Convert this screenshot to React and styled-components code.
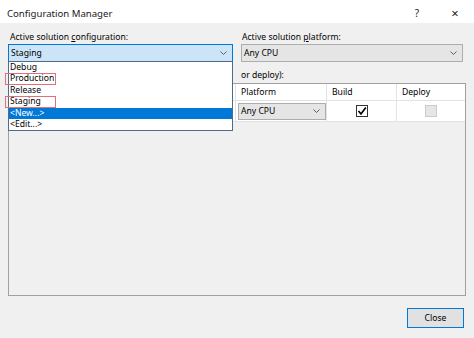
import styled, { createGlobalStyle } from "styled-components"

const GlobalStyle = createGlobalStyle`
html, body {
  margin: 0;
  padding: 0;
  background: #ffffff;
}
body {
  font-family: "Noto Sans", "Open Sans", sans-serif;
}
`

const Window = styled.div`
width: 474px;
height: 338px;
background: #f0f0f0;
display: flex;
flex-direction: column;
color: #000;
font-size: 8.6px;
overflow: hidden;
`

const TitleBar = styled.div`
height: 23px;
background: #ffffff;
display: flex;
align-items: center;
padding-left: 7px;
font-size: 9.6px;
color: #1a1a1a;
`

const Title = styled.span`
flex: 1;
padding-top: 3px;
`

const TitleButton = styled.span`
width: 38px;
text-align: center;
padding-top: 3px;
font-size: ${(p) => p.size || 10}px;
color: #222;
`

const Body = styled.div`
flex: 1;
display: flex;
flex-direction: column;
padding: 8px 8px 0 8px;
`

const TwoCols = styled.div`
display: grid;
grid-template-columns: 225px 222px;
column-gap: 8px;
`

const Label = styled.div`
height: 12px;
line-height: 12px;
padding-left: ${(p) => (p.indent === undefined ? 1 : p.indent)}px;
white-space: nowrap;
`

const Field = styled.div`
position: relative;
display: flex;
flex-direction: column;
gap: 1px;
`

const Combo = styled.div`
height: 18px;
box-sizing: border-box;
display: flex;
align-items: center;
justify-content: space-between;
padding: 0 5px 0 2px;
border: 1px solid ${(p) => (p.active ? "#0078d7" : "#adadad")};
background: ${(p) => (p.active ? "#cce4f7" : "#e5e5e5")};
`

const DropList = styled.div`
position: absolute;
top: 100%;
left: 0;
right: 0;
margin-top: -1px;
background: #ffffff;
border: 1px solid #4d6a8f;
z-index: 5;
`

const Item = styled.div`
height: 11.4px;
line-height: 11.4px;
padding-left: 1px;
background: ${(p) => (p.selected ? "#0078d7" : "transparent")};
color: ${(p) => (p.selected ? "#ffffff" : "#000")};
`

const Marked = styled.span`
display: inline-block;
width: 51px;
height: 12px;
margin-left: -5px;
padding-left: 5px;
box-sizing: border-box;
outline: 1px solid #e2707a;
outline-offset: -1px;
`

const ContextRow = styled(TwoCols)`
margin-top: 7px;
`

const Table = styled.div`
margin-top: 2px;
height: 213px;
box-sizing: border-box;
border: 1px solid #a0a0a0;
background: #f0f0f0;
`

const Row = styled.div`
display: grid;
grid-template-columns: 111px 116px 91px 70px 1fr;
background: #ffffff;
height: ${(p) => p.h}px;
`

const Cell = styled.div`
display: flex;
align-items: center;
justify-content: ${(p) => (p.center ? "center" : "flex-start")};
padding-left: ${(p) => (p.center ? 0 : 5)}px;
border-right: 1px solid #e3e3e3;
border-bottom: 1px solid #e3e3e3;
white-space: nowrap;
overflow: hidden;
&:last-child {
  border-right: none;
}
`

const CellCombo = styled(Combo)`
width: 88px;
height: 17px;
margin-left: -3px;
`

const Check = styled.span`
width: 12px;
height: 12px;
box-sizing: border-box;
display: flex;
align-items: center;
justify-content: center;
border: 1px solid ${(p) => (p.disabled ? "#cccccc" : "#333333")};
background: ${(p) => (p.disabled ? "#e6e6e6" : "#ffffff")};
`

const Footer = styled.div`
display: flex;
justify-content: flex-end;
padding: 12px 2px 0 0;
`

const Button = styled.button`
width: 57px;
height: 20px;
box-sizing: border-box;
border: 1px solid #0078d7;
background: #e1e1e1;
font-family: inherit;
font-size: 8.6px;
color: #000;
padding: 0;
`

const Chevron = () => (
  <svg width="7" height="4" viewBox="0 0 7 4">
    <polyline points="0.5,0.5 3.5,3.5 6.5,0.5" fill="none" stroke="#606060" strokeWidth="1" />
  </svg>
)

const Tick = () => (
  <svg width="10" height="10" viewBox="0 0 10 10">
    <path d="M1.5 5 L4 8 L8.8 1.6" fill="none" stroke="#000" strokeWidth="1.7" />
  </svg>
)

const App = () => {
  return (
    <Window>
      <GlobalStyle />
      <TitleBar>
        <Title>Configuration Manager</Title>
        <TitleButton size={10}>?</TitleButton>
        <TitleButton size={13}>×</TitleButton>
      </TitleBar>
      <Body>
        <TwoCols>
          <Field>
            <Label indent={2}>Active solution <u>c</u>onfiguration:</Label>
            <Combo active>
              <span>Staging</span>
              <Chevron />
            </Combo>
            <DropList>
              <Item>Debug</Item>
              <Item><Marked>Production</Marked></Item>
              <Item>Release</Item>
              <Item><Marked>Staging</Marked></Item>
              <Item selected>&lt;New...&gt;</Item>
              <Item>&lt;Edit...&gt;</Item>
            </DropList>
          </Field>
          <Field>
            <Label>Active solution <u>p</u>latform:</Label>
            <Combo>
              <span>Any CPU</span>
              <Chevron />
            </Combo>
          </Field>
        </TwoCols>
        <ContextRow>
          <Label />
          <Label indent={0}>or deploy):</Label>
        </ContextRow>
        <Table>
          <Row h={17}>
            <Cell />
            <Cell />
            <Cell>Platform</Cell>
            <Cell>Build</Cell>
            <Cell>Deploy</Cell>
          </Row>
          <Row h={21}>
            <Cell />
            <Cell />
            <Cell>
              <CellCombo>
                <span>Any CPU</span>
                <Chevron />
              </CellCombo>
            </Cell>
            <Cell center>
              <Check><Tick /></Check>
            </Cell>
            <Cell center>
              <Check disabled />
            </Cell>
          </Row>
        </Table>
        <Footer>
          <Button>Close</Button>
        </Footer>
      </Body>
    </Window>
  )
}

export default App
